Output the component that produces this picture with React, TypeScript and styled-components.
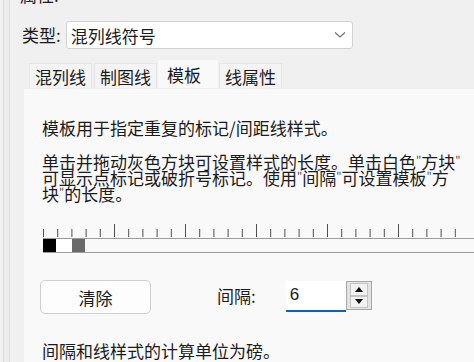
import React from "react";
import styled, { createGlobalStyle } from "styled-components";

const GlobalStyle = createGlobalStyle`
  html, body {
    margin: 0;
    padding: 0;
    background: #f0f0f0;
    overflow: hidden;
  }
  body {
    font-family: "Noto Sans CJK SC", "Noto Sans", sans-serif;
    color: #1b1b1b;
  }
`;

const Window = styled.div`
  width: 474px;
  height: 362px;
  display: flex;
  overflow: hidden;
`;

const SideStrip = styled.div`
  width: 5px;
  flex-shrink: 0;
  margin-left: 3px;
  border-left: 1px solid #dcdcdc;
  border-right: 1px solid #dcdcdc;
  background: #ececec;
`;

const Main = styled.div`
  flex: 1;
  display: flex;
  flex-direction: column;
  min-width: 0;
`;

const Title = styled.div`
  margin-top: -15px;
  padding-left: 10px;
  height: 20px;
  font-size: 17px;
  line-height: 20px;
`;

const TypeRow = styled.div`
  display: flex;
  align-items: center;
  margin-top: 16px;
  padding-left: 12px;
  gap: 5px;
`;

const Label = styled.span`
  font-size: 17px;
  line-height: 20px;
  white-space: nowrap;
`;

const Select = styled.div`
  width: 275px;
  height: 26px;
  background: #ffffff;
  border: 1px solid #d2d2d2;
  border-radius: 3px;
  display: flex;
  align-items: center;
  justify-content: space-between;
  padding: 0 6px 0 4px;
  font-size: 17px;
`;

const TabRow = styled.div`
  display: flex;
  align-items: flex-end;
  gap: 2px;
  margin-top: 12px;
  padding-left: 19px;
  height: 27px;
`;

const Tab = styled.div<{ $active?: boolean }>`
  height: ${(p) => (p.$active ? 27 : 24)}px;
  display: flex;
  align-items: center;
  padding: ${(p) => (p.$active ? "0 16px 0 8px" : "0 5px")};
  margin: ${(p) => (p.$active ? "0 -1px" : "0")};
  font-size: 17px;
  background: ${(p) => (p.$active ? "#f9f9f9" : "#f4f4f4")};
  border: 1px solid ${(p) => (p.$active ? "#f9f9f9" : "#e6e6e6")};
  border-bottom: none;
  white-space: nowrap;
`;

const Panel = styled.div`
  flex: 1;
  margin-left: 14px;
  background: #f9f9f9;
  border-top: 1px solid #eeeeee;
  padding: 31px 0 0 18px;
  display: flex;
  flex-direction: column;
`;

const Para = styled.div<{ $gap?: number }>`
  font-size: 17px;
  line-height: 16px;
  white-space: nowrap;
  margin-top: ${(p) => p.$gap ?? 0}px;
`;

const Quote = styled.span`
  font-size: 11px;
  line-height: 0;
  vertical-align: 5px;
  color: #555;
`;

const RulerBox = styled.div`
  margin-top: 22px;
  height: 30px;
  margin-left: 1px;
`;

const ControlRow = styled.div`
  display: flex;
  align-items: center;
  margin-top: 26px;
  margin-left: -2px;
  height: 34px;
`;

const Button = styled.div`
  width: 109px;
  height: 32px;
  border: 1px solid #d0d0d0;
  border-radius: 5px;
  background: #fdfdfd;
  display: flex;
  align-items: center;
  justify-content: center;
  font-size: 17px;
`;

const SpacingLabel = styled(Label)`
  margin-left: 66px;
  margin-top: -2px;
`;

const NumberBox = styled.div`
  margin-left: 30px;
  display: flex;
  align-items: flex-start;
  height: 32px;
`;

const Input = styled.div`
  width: 56px;
  height: 29px;
  background: #ffffff;
  border-bottom: 2px solid #0067c0;
  padding-left: 4px;
  font-family: "Liberation Sans", Arial, sans-serif;
  font-size: 17px;
  line-height: 27px;
`;

const Spinner = styled.div`
  width: 26px;
  height: 29px;
  border: 1px solid #a8a8a8;
  background: #e3e3e3;
  display: flex;
  flex-direction: column;
  justify-content: space-between;
  padding: 1px 3px;
  box-sizing: border-box;
`;

const SpinButton = styled.div`
  height: 11px;
  background: #f2f2f2;
  border: 1px solid #c4c4c4;
  display: flex;
  align-items: center;
  justify-content: center;
`;

function Chevron() {
  return (
    <svg width="12" height="8" viewBox="0 0 12 8">
      <path d="M1 1.5 L6 6 L11 1.5" fill="none" stroke="#6f6f6f" strokeWidth="1.2" />
    </svg>
  );
}

function Triangle({ up }: { up?: boolean }) {
  return (
    <svg width="8" height="5" viewBox="0 0 8 5">
      <path d={up ? "M0 5 L4 0 L8 5 Z" : "M0 0 L4 5 L8 0 Z"} fill="#111" />
    </svg>
  );
}

function Ruler() {
  const ticks = Array.from({ length: 30 }, (_, i) => i);
  return (
    <svg width="440" height="30" viewBox="0 0 440 30">
      {ticks.map((i) => {
        const x = 0.5 + i * 14.2;
        const major = i % 5 === 0 && i > 0;
        return (
          <line
            key={i}
            x1={x}
            x2={x}
            y1={major ? 0 : 5}
            y2={13}
            stroke="#505050"
            strokeWidth="1"
          />
        );
      })}
      <line x1="0" x2="440" y1="14.5" y2="14.5" stroke="#9a9a9a" />
      <line x1="0" x2="440" y1="28.5" y2="28.5" stroke="#9a9a9a" />
      <line x1="0.5" x2="0.5" y1="14" y2="29" stroke="#9a9a9a" />
      <rect x="0" y="15" width="13" height="13" fill="#000" />
      <rect x="13" y="15" width="16" height="13" fill="#ffffff" />
      <rect x="29" y="15" width="13" height="13" fill="#6a6a6a" />
    </svg>
  );
}

export default function App() {
  return (
    <>
      <GlobalStyle />
      <Window>
        <SideStrip />
        <Main>
          <Title>属性:</Title>
          <TypeRow>
            <Label>类型:</Label>
            <Select>
              <span>混列线符号</span>
              <Chevron />
            </Select>
          </TypeRow>
          <TabRow>
            <Tab>混列线</Tab>
            <Tab>制图线</Tab>
            <Tab $active>模板</Tab>
            <Tab>线属性</Tab>
          </TabRow>
          <Panel>
            <Para>模板用于指定重复的标记/间距线样式。</Para>
            <Para $gap={18}>
              单击并拖动灰色方块可设置样式的长度。单击白色<Quote>"</Quote>方块<Quote>"</Quote>
              <br />
              可显示点标记或破折号标记。使用<Quote>"</Quote>间隔<Quote>"</Quote>可设置模板<Quote>"</Quote>方
              <br />
              块<Quote>"</Quote>的长度。
            </Para>
            <RulerBox>
              <Ruler />
            </RulerBox>
            <ControlRow>
              <Button>清除</Button>
              <SpacingLabel>间隔:</SpacingLabel>
              <NumberBox>
                <Input>6</Input>
                <Spinner>
                  <SpinButton>
                    <Triangle up />
                  </SpinButton>
                  <SpinButton>
                    <Triangle />
                  </SpinButton>
                </Spinner>
              </NumberBox>
            </ControlRow>
            <Para $gap={29}>间隔和线样式的计算单位为磅。</Para>
          </Panel>
        </Main>
      </Window>
    </>
  );
}
